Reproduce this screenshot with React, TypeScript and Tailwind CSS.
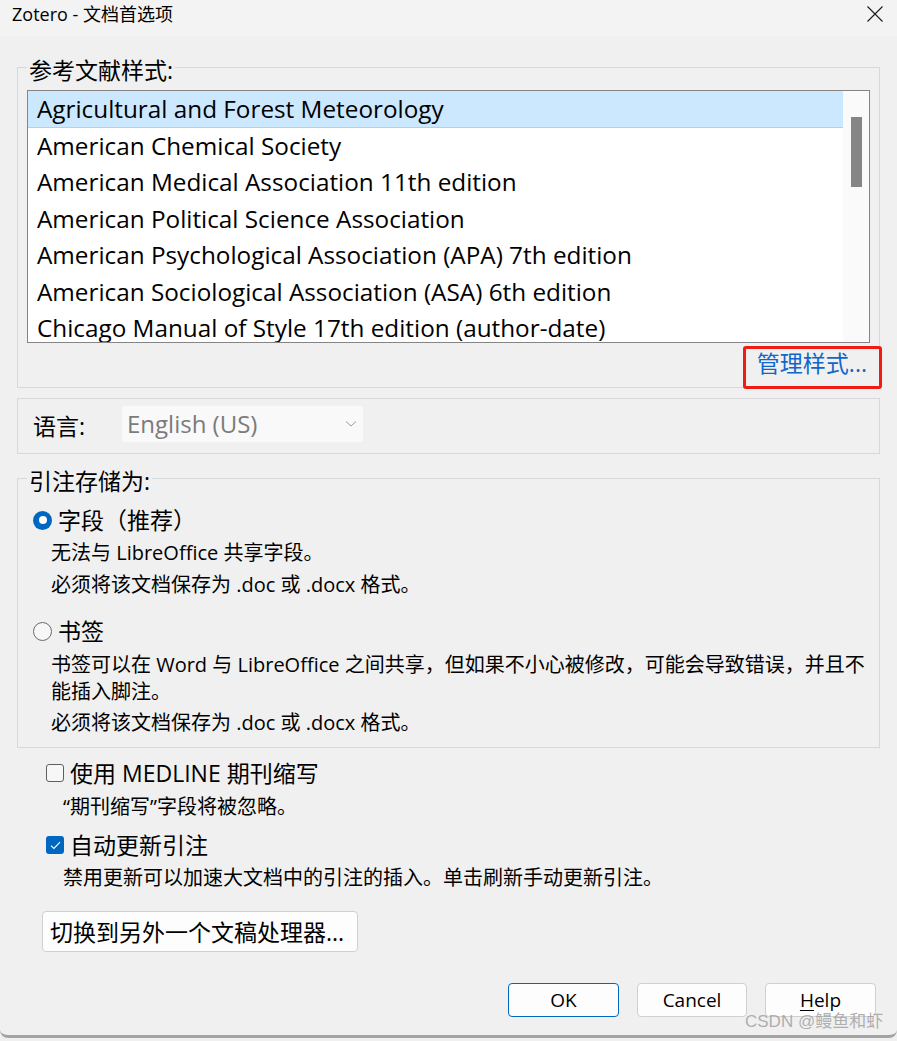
import React from "react";

const styles = [
  "Agricultural and Forest Meteorology",
  "American Chemical Society",
  "American Medical Association 11th edition",
  "American Political Science Association",
  "American Psychological Association (APA) 7th edition",
  "American Sociological Association (ASA) 6th edition",
  "Chicago Manual of Style 17th edition (author-date)",
];

function Radio({ checked }: { checked: boolean }) {
  if (checked) {
    return (
      <span className="flex h-[19px] w-[19px] items-center justify-center rounded-full bg-[#0067c0]">
        <span className="h-[8px] w-[8px] rounded-full bg-white" />
      </span>
    );
  }
  return <span className="h-[19px] w-[19px] rounded-full border border-[#6b6b6b] bg-[#f7f7f7]" />;
}

function Checkbox({ checked }: { checked: boolean }) {
  if (checked) {
    return (
      <span className="flex h-[18px] w-[18px] items-center justify-center rounded-[3px] bg-[#0067c0]">
        <svg width="11" height="9" viewBox="0 0 11 9" fill="none">
          <path d="M1 4.6 L3.9 7.4 L10 1.2" stroke="white" strokeWidth="1.1" />
        </svg>
      </span>
    );
  }
  return <span className="h-[18px] w-[18px] rounded-[3px] border border-[#5f5f5f] bg-[#f7f7f7]" />;
}

export default function App() {
  return (
    <div className="relative h-[1041px] w-[897px] overflow-hidden bg-[#f0f0f0] font-['Open_Sans','Noto_Sans_CJK_SC',sans-serif] text-black">
      <div className="h-[1038px] rounded-b-[8px] border-b-[3px] border-[#a3a3a3] bg-[#f0f0f0]">
        {/* title bar */}
        <div className="flex h-[36px] items-start justify-between bg-[#f3f3f3] pl-[12px] pr-[14px]">
          <span className="mt-[3px] text-[18px] leading-[22px]">Zotero - 文档首选项</span>
          <svg className="mt-[6px]" width="16" height="16" viewBox="0 0 16 16">
            <path d="M0.5 0.5 L15.5 15.5 M15.5 0.5 L0.5 15.5" stroke="#1a1a1a" strokeWidth="1.1" />
          </svg>
        </div>

        {/* styles */}
        <fieldset className="mx-[17px] mt-[15px] border border-[#d8d8d8] px-[9px]">
          <legend className="px-[2px] pt-[6px] text-[23px] leading-[26px]">参考文献样式:</legend>
          <div className="mt-[7px] flex h-[253px] border border-[#858585] bg-white">
            <div className="flex-1 overflow-hidden">
              {styles.map((s, i) => (
                <div
                  key={s}
                  className={
                    i === 0
                      ? "h-[36.5px] whitespace-nowrap border-b border-[#a9d4f5] bg-[#cce8ff] pl-[9px] text-[24.3px] leading-[36px]"
                      : "h-[36.5px] whitespace-nowrap pl-[9px] text-[24.3px] leading-[36px]"
                  }
                >
                  {s}
                </div>
              ))}
            </div>
            <div className="w-[26px] bg-[#fafafa] pl-[8px] pt-[26px]">
              <div className="h-[70px] w-[11px] bg-[#858585]" />
            </div>
          </div>
          <div className="flex h-[44px] items-center justify-end pr-[3px]">
            <span className="relative mb-[5px] text-[23px] leading-[26px] text-[#1167c8]">
              管理样式...
              <span className="absolute -bottom-[13px] -left-[14px] -right-[15px] -top-[4px] rounded-[3px] border-[3px] border-[#f01c14]" />
            </span>
          </div>
        </fieldset>

        {/* language */}
        <div className="mx-[17px] mt-[10px] flex h-[56px] items-center border border-[#d8d8d8] pl-[15px]">
          <span className="w-[89px] text-[23px] leading-[28px]">语言:</span>
          <div className="mb-[4px] flex h-[36px] w-[241px] items-center justify-between rounded-[3px] bg-[#f9f9f9] pl-[5px] pr-[6px]">
            <span className="text-[24px] leading-[30px] text-[#7b7b7b]">English (US)</span>
            <svg width="12" height="8" viewBox="0 0 12 8">
              <path d="M1 1.5 L6 6 L11 1.5" stroke="#9a9a9a" strokeWidth="1" fill="none" />
            </svg>
          </div>
        </div>

        {/* citation storage */}
        <fieldset className="mx-[17px] mt-[8px] border border-[#d8d8d8] px-[9px] pb-[11px]">
          <legend className="px-[2px] pt-[6px] text-[23px] leading-[26px]">引注存储为:</legend>
          <div className="pl-[6px]">
            <div className="mt-[11px] flex h-[30px] items-center">
              <Radio checked />
              <span className="ml-[6px] text-[23px] leading-[30px]">字段（推荐）</span>
            </div>
            <div className="pl-[18px] text-[20px] leading-[27px]">
              <p className="mt-[4px]">无法与 LibreOffice 共享字段。</p>
              <p className="mt-[5px]">必须将该文档保存为 .doc 或 .docx 格式。</p>
            </div>
            <div className="mt-[18px] flex h-[30px] items-center">
              <Radio checked={false} />
              <span className="ml-[6px] text-[23px] leading-[30px]">书签</span>
            </div>
            <div className="pl-[18px] text-[20px] leading-[27px]">
              <p className="mt-[5px] whitespace-nowrap">
                书签可以在 Word 与 LibreOffice 之间共享，但如果不小心被修改，可能会导致错误，并且不
                <br />
                能插入脚注。
              </p>
              <p className="mt-[4px]">必须将该文档保存为 .doc 或 .docx 格式。</p>
            </div>
          </div>
        </fieldset>

        {/* options */}
        <div className="pl-[46px]">
          <div className="mt-[10px] flex h-[30px] items-center">
            <Checkbox checked={false} />
            <span className="ml-[6px] text-[23px] leading-[30px]">使用 MEDLINE 期刊缩写</span>
          </div>
          <p className="mt-[5px] pl-[17px] text-[20px] leading-[27px]">“期刊缩写”字段将被忽略。</p>
          <div className="mt-[10px] flex h-[30px] items-center">
            <Checkbox checked />
            <span className="ml-[6px] text-[23px] leading-[30px]">自动更新引注</span>
          </div>
          <p className="mt-[4px] pl-[17px] text-[20px] leading-[27px]">
            禁用更新可以加速大文档中的引注的插入。单击刷新手动更新引注。
          </p>
        </div>

        <div className="mt-[20px] pl-[42px]">
          <button className="h-[41px] w-[316px] rounded-[4px] border border-[#d0d0d0] bg-[#fdfdfd] pl-[7px] text-left text-[23px] leading-[28px]">
            切换到另外一个文稿处理器...
          </button>
        </div>

        <div className="mt-[31px] flex justify-end gap-[18px] pr-[21px]">
          <button className="h-[34px] w-[111px] rounded-[4px] border border-[#0067c0] bg-[#fdfdfd] text-[19px] leading-[24px]">
            OK
          </button>
          <button className="h-[34px] w-[110px] rounded-[4px] border border-[#d0d0d0] bg-[#fdfdfd] text-[19px] leading-[24px]">
            Cancel
          </button>
          <button className="h-[34px] w-[111px] rounded-[4px] border border-[#d0d0d0] bg-[#fdfdfd] text-[19px] leading-[24px]">
            <span className="underline underline-offset-[3px]">H</span>elp
          </button>
        </div>
      </div>

      <span className="absolute left-[745px] top-[1011px] font-['Liberation_Sans','Noto_Sans_CJK_SC',sans-serif] text-[17px] leading-[22px] text-[#9c9c9c]/80">
        CSDN @鳗鱼和虾
      </span>
    </div>
  );
}
